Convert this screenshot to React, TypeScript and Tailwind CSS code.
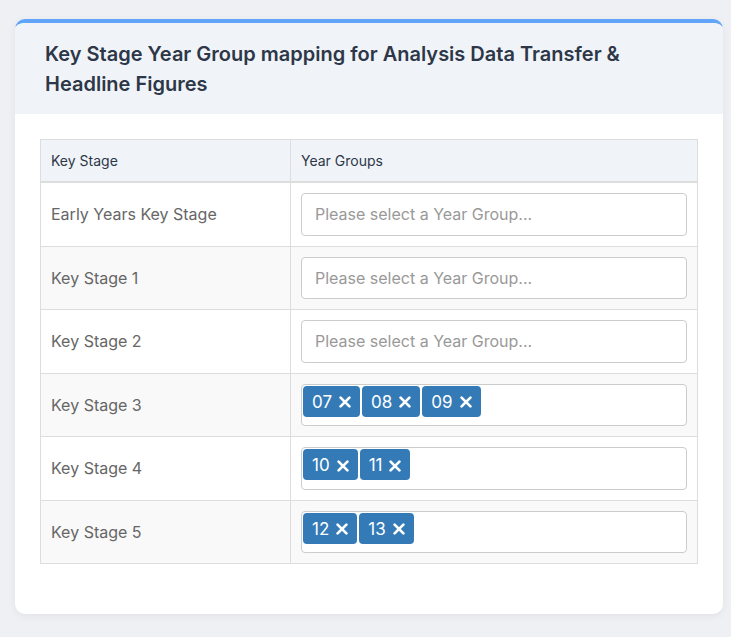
import React from "react";

const rows: { label: string; values: string[] }[] = [
  { label: "Early Years Key Stage", values: [] },
  { label: "Key Stage 1", values: [] },
  { label: "Key Stage 2", values: [] },
  { label: "Key Stage 3", values: ["07", "08", "09"] },
  { label: "Key Stage 4", values: ["10", "11"] },
  { label: "Key Stage 5", values: ["12", "13"] },
];

function XIcon() {
  return (
    <svg width="12" height="12" viewBox="0 0 12 12" className="ml-[7px] mt-[1px]">
      <path d="M1.6 1.6 L10.4 10.4 M10.4 1.6 L1.6 10.4" stroke="white" strokeWidth="2.7" strokeLinecap="round" />
    </svg>
  );
}

export default function App() {
  return (
    <div className="min-h-[637px] bg-[#eef0f4] pt-[19px] px-[15px] pb-[24px]" style={{ fontFamily: "Inter, 'Noto Sans', sans-serif" }}>
      <div className="w-[708px] bg-white rounded-[10px] border-t-4 border-[#60a5fa] shadow-[0_2px_8px_rgba(0,0,0,0.06)] overflow-hidden">
        <div className="bg-[#f0f4f8] px-[30px] pt-[16px] pb-[15px]">
          <h1 className="text-[20px] leading-[30px] font-semibold text-[#2d3748]">
            Key Stage Year Group mapping for Analysis Data Transfer &amp; Headline Figures
          </h1>
        </div>
        <div className="px-[25px] pt-[25px] pb-[50px]">
          <table className="w-[657px] border-collapse border border-[#dddddd] table-fixed">
            <colgroup>
              <col className="w-[250px]" />
              <col className="w-[407px]" />
            </colgroup>
            <thead>
              <tr className="bg-[#f0f4f8]">
                <th className="text-left font-normal text-[14px] leading-[21px] text-[#2d3748] p-[10px] border border-[#dddddd] border-b-2">Key Stage</th>
                <th className="text-left font-normal text-[14px] leading-[21px] text-[#2d3748] p-[10px] border border-[#dddddd] border-b-2">Year Groups</th>
              </tr>
            </thead>
            <tbody>
              {rows.map((r, i) => (
                <tr key={r.label} className={i % 2 === 1 ? "bg-[#f9f9f9]" : "bg-white"}>
                  <td className="p-[10px] border border-[#dddddd] text-[16px] text-[#666666] align-middle">{r.label}</td>
                  <td className="p-[10px] border border-[#dddddd]">
                    {r.values.length === 0 ? (
                      <div className="h-[42.5px] bg-white border border-[#cccccc] rounded-[4px] flex items-center">
                        <span className="pl-[13px] text-[16px] text-[#999999]">Please select a Year Group...</span>
                      </div>
                    ) : (
                      <div className="h-[42.5px] bg-white border border-[#cccccc] rounded-[4px] flex items-start gap-[2px] pl-[1px] pt-[1px]">
                        {r.values.map((v) => (
                          <span key={v} className="h-[31px] bg-[#337ab7] text-white text-[17px] leading-[20px] rounded-[4px] flex items-center pl-[9px] pr-[9px] pt-[1px]">
                            {v}
                            <XIcon />
                          </span>
                        ))}
                      </div>
                    )}
                  </td>
                </tr>
              ))}
            </tbody>
          </table>
        </div>
      </div>
    </div>
  );
}
